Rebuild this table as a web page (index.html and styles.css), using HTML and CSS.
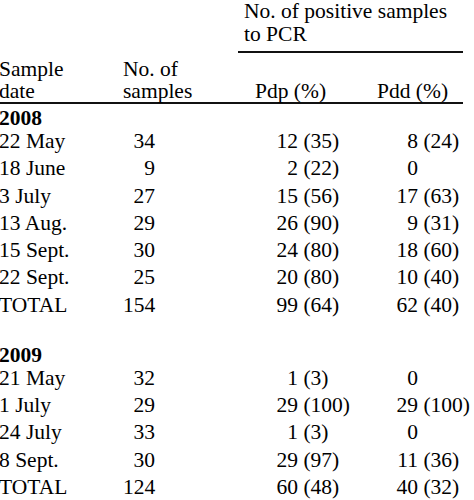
FILE: index.html
```html
<!DOCTYPE html>
<html lang="en">
<head>
<meta charset="utf-8">
<title>PCR samples</title>
<link rel="stylesheet" href="styles.css">
</head>
<body>
<table class="pcr">
  <colgroup>
    <col class="c-date">
    <col class="c-samples">
    <col class="c-pdp">
    <col class="c-pdd">
  </colgroup>
  <thead>
    <tr>
      <th class="blank"></th>
      <th class="blank"></th>
      <th class="span" colspan="2">No. of positive samples<br>to PCR</th>
    </tr>
    <tr class="colheads">
      <th>Sample<br>date</th>
      <th>No. of<br>samples</th>
      <th class="bottom pdp-h">Pdp (%)</th>
      <th class="bottom">Pdd (%)</th>
    </tr>
  </thead>
  <tbody>
    <tr class="year"><td colspan="4">2008</td></tr>
    <tr><td>22 May</td><td><span class="n1">34</span></td><td><span class="n3">12</span> (35)</td><td><span class="n4">8</span> (24)</td></tr>
    <tr><td>18 June</td><td><span class="n1">9</span></td><td><span class="n3">2</span> (22)</td><td><span class="n4">0</span></td></tr>
    <tr><td>3 July</td><td><span class="n1">27</span></td><td><span class="n3">15</span> (56)</td><td><span class="n4">17</span> (63)</td></tr>
    <tr><td>13 Aug.</td><td><span class="n1">29</span></td><td><span class="n3">26</span> (90)</td><td><span class="n4">9</span> (31)</td></tr>
    <tr><td>15 Sept.</td><td><span class="n1">30</span></td><td><span class="n3">24</span> (80)</td><td><span class="n4">18</span> (60)</td></tr>
    <tr><td>22 Sept.</td><td><span class="n1">25</span></td><td><span class="n3">20</span> (80)</td><td><span class="n4">10</span> (40)</td></tr>
    <tr><td>TOTAL</td><td><span class="n1">154</span></td><td><span class="n3">99</span> (64)</td><td><span class="n4">62</span> (40)</td></tr>
    <tr class="year second"><td colspan="4">2009</td></tr>
    <tr><td>21 May</td><td><span class="n1">32</span></td><td><span class="n3">1</span> (3)</td><td><span class="n4">0</span></td></tr>
    <tr><td>1 July</td><td><span class="n1">29</span></td><td><span class="n3">29</span> (100)</td><td><span class="n4">29</span> (100)</td></tr>
    <tr><td>24 July</td><td><span class="n1">33</span></td><td><span class="n3">1</span> (3)</td><td><span class="n4">0</span></td></tr>
    <tr><td>8 Sept.</td><td><span class="n1">30</span></td><td><span class="n3">29</span> (97)</td><td><span class="n4">11</span> (36)</td></tr>
    <tr><td>TOTAL</td><td><span class="n1">124</span></td><td><span class="n3">60</span> (48)</td><td><span class="n4">40</span> (32)</td></tr>
  </tbody>
</table>
</body>
</html>
```
FILE: styles.css
```css
html, body {
  margin: 0;
  padding: 0;
  background: #fff;
  overflow: hidden;
}
body {
  font-family: "Liberation Serif", "Times New Roman", serif;
  font-size: 21.5px;
  color: #000;
}
.pcr {
  table-layout: fixed;
  border-collapse: separate;
  border-spacing: 0;
  width: 464px;
  margin-left: -1px;
}
.c-date { width: 124px; }
.c-samples { width: 115px; }
.c-pdp { width: 139px; }
.c-pdd { width: 86px; }
.pcr th, .pcr td {
  padding: 0;
  font-weight: normal;
  text-align: left;
  white-space: nowrap;
  vertical-align: top;
}
.pcr th.span {
  line-height: 23px;
  padding: 0 0 5px 6px;
  border-bottom: 2px solid #111;
}
.colheads th {
  line-height: 22px;
  padding-top: 5px;
  border-bottom: 2px solid #111;
}
.colheads th.bottom { vertical-align: bottom; }
.colheads th.pdp-h { padding-left: 17px; }
.pcr td { line-height: 27.3px; }
.pcr tr.year td {
  font-weight: bold;
  line-height: 20px;
  padding-top: 4px;
}
.pcr tr.year.second td { padding-top: 25.6px; }
.n1, .n3, .n4 {
  display: inline-block;
  text-align: right;
}
.n1 { width: 32px; }
.n3 { width: 60px; }
.n4 { width: 41px; }
.n4 + * { margin-left: 2px; }
```
